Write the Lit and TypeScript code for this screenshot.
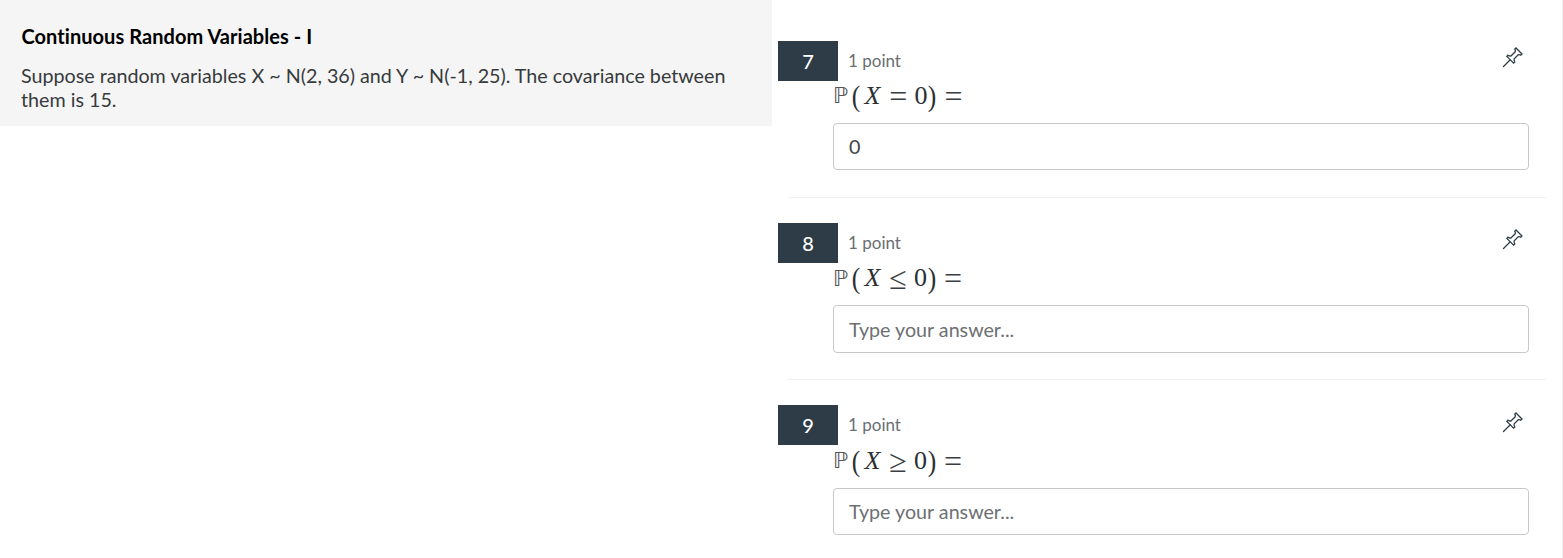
import { LitElement, html, css } from "lit";
import { customElement } from "lit/decorators.js";

const PIN = html`<svg width="22" height="22" viewBox="0 0 22 22" fill="none" stroke="#2f3d46" stroke-width="1.3" stroke-linejoin="miter" stroke-linecap="round">
  <path d="M1.5 20.5 L8 14" />
  <path d="M4.8 10.4 L11.6 17.2 L12.8 16 C12 14.8 11.8 13.8 12.2 12.8 L16.2 8.8 C17 8.4 17.8 8.6 18.8 9.2 L20 8 L14 2 L12.8 3.2 C13.4 4.2 13.6 5 13.2 5.8 L9.2 9.8 C8.2 10.2 7.2 10 6 9.2 Z" />
</svg>`;

const QUESTIONS = [
  { n: 7, op: "=", value: "0" },
  { n: 8, op: "≤", value: "" },
  { n: 9, op: "≥", value: "" },
];

@customElement("app-root")
export class AppRoot extends LitElement {
  static styles = css`
    :host {
      display: block;
      width: 1563px;
      height: 558px;
      overflow: hidden;
      background: #fff;
      font-family: Lato, "Open Sans", sans-serif;
      color: #373a3c;
    }
    .page {
      display: flex;
      height: 558px;
      padding-right: 1px;
      box-sizing: border-box;
      border-right: 1px solid #f0f0f0;
    }
    .left {
      width: 772px;
      flex: none;
    }
    .context {
      background: #f5f5f5;
      height: 126px;
      box-sizing: border-box;
      padding: 24px 21px 0 21px;
    }
    .context h3 {
      margin: 0 0 16px;
      padding-left: 0.5px;
      font-size: 20px;
      line-height: 24px;
      font-weight: 700;
      color: #000;
      letter-spacing: 0.05px;
    }
    .context p {
      margin: 0;
      font-size: 19.7px;
      line-height: 24px;
      color: #373a3c;
      width: 720px;
    }
    .right {
      flex: 1;
      padding: 40.6px 0 0 6px;
    }
    .q {
      height: 182.4px;
      display: flex;
      flex-direction: column;
      box-sizing: border-box;
    }
    .head {
      display: flex;
      height: 40px;
      align-items: center;
      flex: none;
    }
    .badge {
      width: 60px;
      height: 40px;
      flex: none;
      background: #2d3c47;
      color: #fff;
      font-size: 20px;
      font-weight: 500;
      display: flex;
      align-items: center;
      justify-content: center;
    }
    .pts {
      margin: -1px 0 0 10px;
      font-size: 17px;
      color: #6a6f72;
      flex: 1;
    }
    .pin {
      display: flex;
      margin: -7px 37px 0 0;
    }
    .math {
      margin: 0 0 0 55px;
      height: 42.4px;
      display: flex;
      align-items: center;
      padding-bottom: 12px;
      box-sizing: border-box;
      font-family: "Liberation Serif", serif;
      font-size: 26px;
      font-weight: 400;
      color: #2b2f32;
      white-space: pre;
    }
    .bb {
      font-family: "DejaVu Sans", sans-serif;
      font-size: 22px;
      margin-right: 3px;
      color: #555;
    }
    .paren {
      font-size: 30px;
      font-weight: 400;
      display: inline-block;
      transform: scaleX(0.85);
    }
    .math i {
      font-style: italic;
      margin: 0 2px 0 3px;
    }
    .op {
      margin: 0 7px;
      font-size: 32px;
      font-weight: 400;
      line-height: 1;
      color: #3a3e41;
    }
    .input {
      margin-left: 55px;
      width: 696px;
      height: 47.3px;
      box-sizing: border-box;
      border: 1px solid #c8c8c8;
      border-radius: 4px;
      padding: 0 15px;
      display: flex;
      align-items: center;
      font-size: 19.7px;
      color: #3f4345;
      background: #fff;
      flex: none;
    }
    .input.empty {
      color: #6d7073;
    }
    hr {
      margin: 26.7px 14px 0 10px;
      border: 0;
      border-top: 1px solid #f1f1f1;
      flex: none;
    }
  `;

  render() {
    return html`<div class="page">
      <div class="left">
        <div class="context">
          <h3>Continuous Random Variables - I</h3>
          <p>Suppose random variables X ~ N(2, 36) and Y ~ N(-1, 25). The covariance between them is 15.</p>
        </div>
      </div>
      <div class="right">
        ${QUESTIONS.map(
          (q, i) => html`<div class="q">
            <div class="head">
              <div class="badge">${q.n}</div>
              <div class="pts">1 point</div>
              <div class="pin">${PIN}</div>
            </div>
            <div class="math"><span class="bb">ℙ</span><span class="paren">(</span><i>X</i><span class="op">${q.op}</span>0<span class="paren">)</span><span class="op">=</span></div>
            <div class="input ${q.value ? "" : "empty"}">${q.value || "Type your answer..."}</div>
            ${i < 2 ? html`<hr />` : ""}
          </div>`
        )}
      </div>
    </div>`;
  }
}
